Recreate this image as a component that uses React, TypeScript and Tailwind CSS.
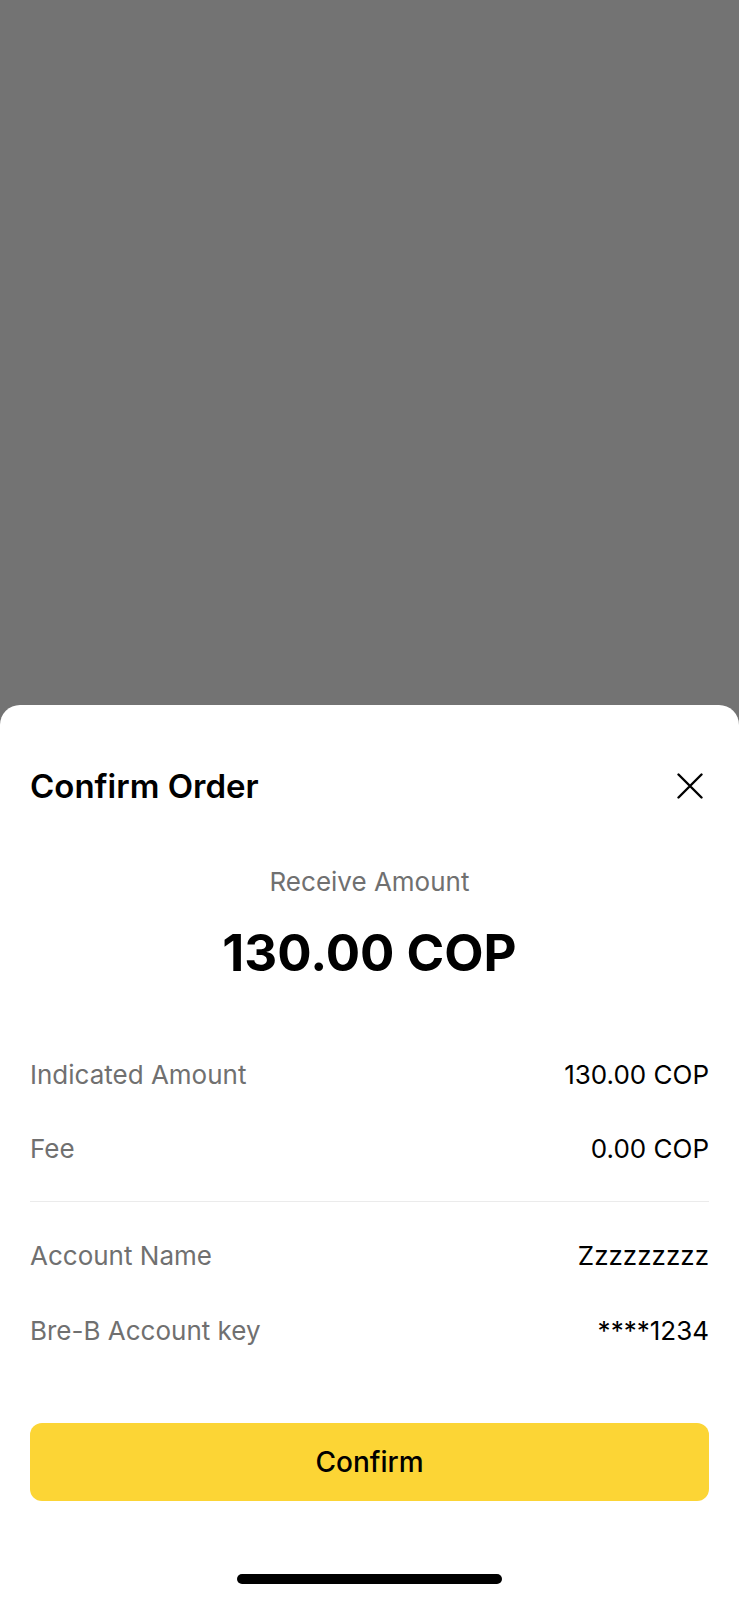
import React from "react";

const rows = [
  { label: "Indicated Amount", value: "130.00 COP" },
  { label: "Fee", value: "0.00 COP" },
];

const accountRows = [
  { label: "Account Name", value: "Zzzzzzzzz" },
  { label: "Bre-B Account key", value: "****1234" },
];

export default function App() {
  return (
    <div
      className="flex h-[1600px] w-full flex-col bg-[#737373] text-black"
      style={{ fontFamily: "Inter, 'Noto Sans', sans-serif" }}
    >
      {/* dimmed backdrop */}
      <div className="flex-1" />

      {/* bottom sheet */}
      <div className="flex flex-col rounded-t-[20px] bg-white px-[30px] pt-[61px] pb-[16px]">
        <div className="flex h-[40px] items-center justify-between">
          <h2 className="text-[33px] font-semibold leading-[40px]">Confirm Order</h2>
          <button type="button" className="mr-[6px] flex h-[26px] w-[26px] items-center justify-center">
            <svg width="26" height="26" viewBox="0 0 26 26" fill="none">
              <path d="M1.5 1.5L24.5 24.5M24.5 1.5L1.5 24.5" stroke="#000" strokeWidth="2.4" strokeLinecap="round" />
            </svg>
          </button>
        </div>

        <p className="mt-[60px] text-center text-[26px] leading-[32px] text-[#707070]">Receive Amount</p>
        <p className="mt-[27px] text-center text-[51px] font-bold leading-[56px]">130.00 COP</p>

        <div className="mt-[78px] flex flex-col gap-[42px]">
          {rows.map((r) => (
            <Row key={r.label} {...r} />
          ))}
        </div>

        <div className="mt-[36px] h-px bg-[#ebebeb]" />

        <div className="mt-[38px] flex flex-col gap-[43px]">
          {accountRows.map((r) => (
            <Row key={r.label} {...r} />
          ))}
        </div>

        <button
          type="button"
          className="mt-[76px] flex h-[78px] w-full items-center justify-center rounded-[12px] bg-[#fcd535] text-[28px] font-medium text-black"
        >
          Confirm
        </button>

        <div className="mt-[73px] flex justify-center">
          <div className="h-[10px] w-[265px] rounded-full bg-black" />
        </div>
      </div>
    </div>
  );
}

const Row = ({ label, value }: { label: string; value: string }) => (
  <div className="flex h-[32px] items-center justify-between text-[26px] leading-[32px]">
    <span className="text-[#707070]">{label}</span>
    <span className="text-black">{value}</span>
  </div>
);
